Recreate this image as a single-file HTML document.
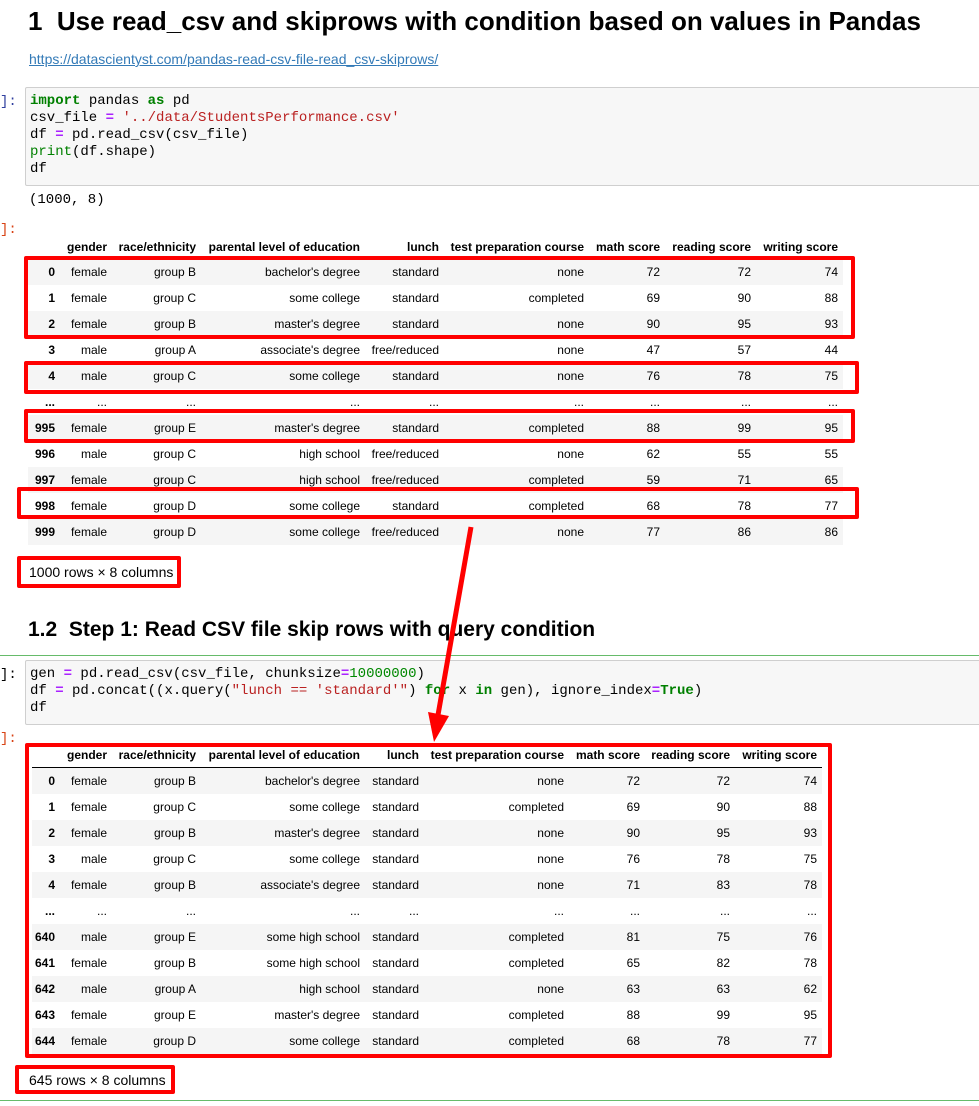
<!DOCTYPE html><html><head><style>
body{margin:0;width:979px;height:1106px;position:relative;background:#fff;font-family:"Liberation Sans",sans-serif;overflow:hidden}
.a{position:absolute}
h1{position:absolute;margin:0;font-size:26px;font-weight:bold;left:28px;top:6px;color:#000}
h2{position:absolute;margin:0;font-size:21px;font-weight:bold;left:28px;top:618px}
.code{position:absolute;left:25px;right:-2px;background:#f7f7f7;border:1px solid #cfcfcf;border-radius:2px;font-family:"Liberation Mono",monospace;font-size:14px;line-height:17px;padding:5px 4px;white-space:pre;color:#000}
.k{color:#008000;font-weight:bold}.o{color:#aa22ff;font-weight:bold}.s{color:#ba2121}.b{color:#008000}.n{color:#080}
.pr{position:absolute;left:0;font-family:"Liberation Mono",monospace;font-size:14px}
table{position:absolute;border-collapse:collapse;font-size:12px;table-layout:fixed}
td,th{text-align:right;padding:0 5px 0 0;height:26px;white-space:nowrap;overflow:visible}
th{font-weight:bold}
tbody tr:nth-child(odd){background:#f5f5f5}
thead th{height:24px}
.box{position:absolute;border:4px solid #f00;border-radius:2px}
</style></head><body>
<h1>1&nbsp; Use read_csv and skiprows with condition based on values in Pandas</h1>
<div class="a" style="left:29px;top:51px;font-size:14px;color:#337ab7;text-decoration:underline">https://datascientyst.com/pandas-read-csv-file-read_csv-skiprows/</div>
<div class="pr" style="top:94px;color:#303f9f">]:</div>
<div class="code" style="top:87px;height:87px"><span class="k">import</span> pandas <span class="k">as</span> pd
csv_file <span class="o">=</span> <span class="s">'../data/StudentsPerformance.csv'</span>
df <span class="o">=</span> pd.read_csv(csv_file)
<span class="b">print</span>(df.shape)
df</div>
<div class="a" style="left:29px;top:192px;font-family:'Liberation Mono',monospace;font-size:14px">(1000, 8)</div>
<div class="pr" style="top:222px;color:#d84315">]:</div>
<table style="left:28px;top:235px;width:815px">
<colgroup><col style="width:32px"><col style="width:52px"><col style="width:89px"><col style="width:164px"><col style="width:79px"><col style="width:145px"><col style="width:76px"><col style="width:91px"><col style="width:87px"></colgroup>
<thead><tr><th></th><th>gender</th><th>race/ethnicity</th><th>parental level of education</th><th>lunch</th><th>test preparation course</th><th>math score</th><th>reading score</th><th>writing score</th></tr></thead>
<tbody>
<tr><th>0</th><td>female</td><td>group B</td><td>bachelor's degree</td><td>standard</td><td>none</td><td>72</td><td>72</td><td>74</td></tr>
<tr><th>1</th><td>female</td><td>group C</td><td>some college</td><td>standard</td><td>completed</td><td>69</td><td>90</td><td>88</td></tr>
<tr><th>2</th><td>female</td><td>group B</td><td>master's degree</td><td>standard</td><td>none</td><td>90</td><td>95</td><td>93</td></tr>
<tr><th>3</th><td>male</td><td>group A</td><td>associate's degree</td><td>free/reduced</td><td>none</td><td>47</td><td>57</td><td>44</td></tr>
<tr><th>4</th><td>male</td><td>group C</td><td>some college</td><td>standard</td><td>none</td><td>76</td><td>78</td><td>75</td></tr>
<tr><th>...</th><td>...</td><td>...</td><td>...</td><td>...</td><td>...</td><td>...</td><td>...</td><td>...</td></tr>
<tr><th>995</th><td>female</td><td>group E</td><td>master's degree</td><td>standard</td><td>completed</td><td>88</td><td>99</td><td>95</td></tr>
<tr><th>996</th><td>male</td><td>group C</td><td>high school</td><td>free/reduced</td><td>none</td><td>62</td><td>55</td><td>55</td></tr>
<tr><th>997</th><td>female</td><td>group C</td><td>high school</td><td>free/reduced</td><td>completed</td><td>59</td><td>71</td><td>65</td></tr>
<tr><th>998</th><td>female</td><td>group D</td><td>some college</td><td>standard</td><td>completed</td><td>68</td><td>78</td><td>77</td></tr>
<tr><th>999</th><td>female</td><td>group D</td><td>some college</td><td>free/reduced</td><td>none</td><td>77</td><td>86</td><td>86</td></tr>
</tbody></table>
<div class="a" style="left:29px;top:564px;font-size:14px">1000 rows × 8 columns</div>
<div class="box" style="left:24px;top:256px;width:823px;height:75px"></div>
<div class="box" style="left:24px;top:361px;width:827px;height:25px"></div>
<div class="box" style="left:24px;top:409px;width:823px;height:26px"></div>
<div class="box" style="left:17px;top:487px;width:834px;height:24px"></div>
<div class="box" style="left:17px;top:556px;width:156px;height:24px"></div>
<div class="a" style="left:0;top:655px;width:979px;height:1px;background:#66bb6a"></div>
<h2>1.2&nbsp; Step 1: Read CSV file skip rows with query condition</h2>
<div class="pr" style="top:667px">]:</div>
<div class="code" style="top:660px;height:53px">gen <span class="o">=</span> pd.read_csv(csv_file, chunksize<span class="o">=</span><span class="n">10000000</span>)
df <span class="o">=</span> pd.concat((x.query(<span class="s">"lunch == 'standard'"</span>) <span class="k">for</span> x <span class="k">in</span> gen), ignore_index<span class="o">=</span><span class="k">True</span>)
df</div>
<div class="pr" style="top:731px;color:#d84315">]:</div>
<table style="left:32px;top:743px;width:790px">
<colgroup><col style="width:28px"><col style="width:52px"><col style="width:89px"><col style="width:164px"><col style="width:59px"><col style="width:145px"><col style="width:76px"><col style="width:90px"><col style="width:87px"></colgroup>
<thead><tr style="border-bottom:1px solid #000"><th></th><th>gender</th><th>race/ethnicity</th><th>parental level of education</th><th>lunch</th><th>test preparation course</th><th>math score</th><th>reading score</th><th>writing score</th></tr></thead>
<tbody>
<tr><th>0</th><td>female</td><td>group B</td><td>bachelor's degree</td><td>standard</td><td>none</td><td>72</td><td>72</td><td>74</td></tr>
<tr><th>1</th><td>female</td><td>group C</td><td>some college</td><td>standard</td><td>completed</td><td>69</td><td>90</td><td>88</td></tr>
<tr><th>2</th><td>female</td><td>group B</td><td>master's degree</td><td>standard</td><td>none</td><td>90</td><td>95</td><td>93</td></tr>
<tr><th>3</th><td>male</td><td>group C</td><td>some college</td><td>standard</td><td>none</td><td>76</td><td>78</td><td>75</td></tr>
<tr><th>4</th><td>female</td><td>group B</td><td>associate's degree</td><td>standard</td><td>none</td><td>71</td><td>83</td><td>78</td></tr>
<tr><th>...</th><td>...</td><td>...</td><td>...</td><td>...</td><td>...</td><td>...</td><td>...</td><td>...</td></tr>
<tr><th>640</th><td>male</td><td>group E</td><td>some high school</td><td>standard</td><td>completed</td><td>81</td><td>75</td><td>76</td></tr>
<tr><th>641</th><td>female</td><td>group B</td><td>some high school</td><td>standard</td><td>completed</td><td>65</td><td>82</td><td>78</td></tr>
<tr><th>642</th><td>male</td><td>group A</td><td>high school</td><td>standard</td><td>none</td><td>63</td><td>63</td><td>62</td></tr>
<tr><th>643</th><td>female</td><td>group E</td><td>master's degree</td><td>standard</td><td>completed</td><td>88</td><td>99</td><td>95</td></tr>
<tr><th>644</th><td>female</td><td>group D</td><td>some college</td><td>standard</td><td>completed</td><td>68</td><td>78</td><td>77</td></tr>
</tbody></table>
<div class="box" style="left:25px;top:743px;width:799px;height:307px"></div>
<div class="a" style="left:29px;top:1072px;font-size:14px">645 rows × 8 columns</div>
<div class="box" style="left:15px;top:1065px;width:152px;height:21px"></div>
<div class="a" style="left:0;top:1100px;width:979px;height:1px;background:#66bb6a"></div>
<svg class="a" style="left:0;top:0" width="979" height="1106"><line x1="471" y1="527" x2="438" y2="715" stroke="#f00" stroke-width="5"/><polygon points="428,712 449,716 434,742" fill="#f00"/></svg>
</body></html>
